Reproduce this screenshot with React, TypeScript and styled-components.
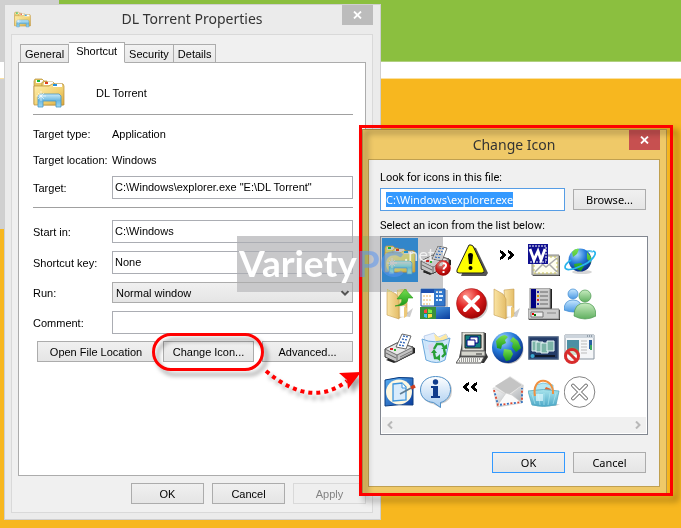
import React, { useEffect, useRef } from "react";
import styled, { createGlobalStyle, css } from "styled-components";

const GlobalStyle = createGlobalStyle`
  * { box-sizing: border-box; }
  body { margin: 0; }
  button, input, select { font: inherit; color: inherit; margin: 0; }
`;

const Desktop = styled.main`
  position: relative;
  min-height: 100vh;
  overflow: hidden;
  color: #000;
  font: 11px/14px "Liberation Sans", Arial, sans-serif;
  background:
    linear-gradient(#d0d0d0, #d0d0d0) 0 0 / 59px 62px no-repeat,
    linear-gradient(#d0d0d0, #d0d0d0) 0 79px / 59px 150px no-repeat,
    linear-gradient(#8bbf3f 0 61px, #b0d080 61px 62px, #fff 62px 78px, #fbe0a0 78px 79px, #f7b71f 79px);
`;

const Window = styled.section`
  position: absolute;
  display: flex;
  flex-direction: column;
  border: 1px solid #cfcfcf;
  background: #ebebeb;
`;

const PropertiesWindow = styled(Window)`
  left: 4px;
  top: 4px;
  width: 377px;
  padding: 0 7px 6px 6px;
`;

const IconWindow = styled(Window)`
  left: 362px;
  top: 129px;
  width: 305px;
  padding: 0 6px 6px 5px;
  border-color: #b6974e;
  background: #efc968;
  font-family: "Noto Sans", "Open Sans", sans-serif;
`;

const TitleBar = styled.header`
  display: grid;
  grid-template-columns: 31px 1fr 31px;
  align-items: start;
  height: 29px;
`;

const TitleIcon = styled.span`
  padding: 6px 0 0 3px;
  line-height: 0;
`;

const Title = styled.h1<{ $low?: boolean }>`
  margin: 0;
  padding-top: ${(p) => (p.$low ? 5 : 4)}px;
  text-align: center;
  white-space: nowrap;
  color: #333;
  font: 400 14px/20px "Noto Sans", "Open Sans", sans-serif;
`;

const CloseButton = styled.button<{ $danger?: boolean }>`
  display: grid;
  place-items: center;
  height: 20px;
  padding: 0;
  border: 0;
  background: ${(p) => (p.$danger ? "#c75050" : "#bcbcbc")};
`;

const Client = styled.div<{ $tone: string }>`
  border: 1px solid ${(p) => p.$tone};
  background: #f0f0f0;
`;

const PropertiesClient = styled(Client)`
  padding: 7px 6px 8px;
`;

const IconClient = styled(Client)`
  padding: 10px 13px 13px 11px;
`;

const Tabs = styled.div`
  display: flex;
  align-items: flex-end;
  height: 21px;
  margin-bottom: -1px;
  padding-left: 2px;
`;

const Tab = styled.button<{ $active?: boolean }>`
  height: 19px;
  padding: 0 4px;
  border: 1px solid #acacac;
  border-left-width: 0;
  background: linear-gradient(#f2f2f2, #e8e8e8);
  white-space: nowrap;
  &:first-child { border-left-width: 1px; }
  ${(p) => p.$active && css`
    height: 21px;
    padding: 0 7px 3px;
    border-bottom-color: #fff;
    background: #fff;
  `}
`;

const Panel = styled.div`
  min-height: 414px;
  padding: 15px 12px 0 14px;
  border: 1px solid #acacac;
  background: #fff;
`;

const Identity = styled.div`
  display: flex;
  align-items: center;
  gap: 31px;
  height: 29px;
  margin-bottom: 7px;
`;

const Rule = styled.hr`
  margin: 0;
  border: 0;
  border-top: 1px solid #a0a0a0;
`;

const Fields = styled.div<{ $rows: string; $pad: string }>`
  display: grid;
  grid-template-columns: 79px 1fr;
  grid-template-rows: ${(p) => p.$rows};
  align-items: center;
  row-gap: 8px;
  padding: ${(p) => p.$pad};
`;

const TextBox = styled.input`
  width: 100%;
  min-width: 0;
  height: 23px;
  padding: 0 2px 2px;
  border: 1px solid #abadb3;
  border-radius: 0;
  outline: 0;
  background: #fff;
`;

const FileBox = styled(TextBox)`
  flex: 1;
  padding: 0 5px 1px;
  border-color: #569de5;
  font: 11px/14px "Noto Sans", sans-serif;
  &::selection { background: #3399ff; color: #fff; }
`;

const SelectWrap = styled.div`
  display: grid;
  align-items: center;
  justify-items: end;
  & > * { grid-area: 1 / 1; }
  & > svg { margin-right: 4px; pointer-events: none; }
`;

const Select = styled.select`
  appearance: none;
  width: 100%;
  height: 21px;
  padding: 0 3px;
  border: 1px solid #acacac;
  border-radius: 0;
  background: linear-gradient(#f0f0f0, #e5e5e5);
`;

const PushButton = styled.button<{ $wide?: boolean; $fill?: boolean; $primary?: boolean }>`
  flex: ${(p) => (p.$fill ? "1 1 0" : "none")};
  width: ${(p) => (p.$wide ? 118 : 73)}px;
  height: 21px;
  padding: 0;
  border: 1px solid ${(p) => (p.$primary ? "#3399ff" : "#acacac")};
  background: linear-gradient(#f0f0f0, #e5e5e5);
  white-space: nowrap;
  &:disabled { border-color: #d9d9d9; background: #efefef; color: #838383; }
`;

const ButtonRow = styled.div<{ $pad: string }>`
  display: flex;
  justify-content: flex-end;
  gap: 8px;
  padding: ${(p) => p.$pad};
`;

const Caption = styled.label`
  display: block;
  font: 11px/16px Roboto, "Noto Sans", sans-serif;
`;

const BrowseRow = styled.div`
  display: flex;
  align-items: center;
  gap: 8px;
  margin: 2px 0 7px;
`;

const IconList = styled.div`
  margin-right: -2px;
  margin-top: 2px;
  padding: 1px;
  border: 1px solid #828790;
  background: #fff;
`;

const IconGrid = styled.div`
  display: grid;
  grid-template-columns: repeat(6, 36px);
  grid-auto-rows: 44px;
  padding-bottom: 3px;
`;

const IconCell = styled.button<{ $selected?: boolean }>`
  display: grid;
  place-items: center;
  padding: 0;
  border: 0;
  background: ${(p) => (p.$selected ? "#3286dc" : "transparent")};
`;

const ScrollTrack = styled.div`
  display: flex;
  align-items: center;
  justify-content: space-between;
  height: 16px;
  padding: 0 5px;
  background: #f0f0f0;
`;

const ScrollButton = styled.button`
  display: grid;
  padding: 0;
  border: 0;
  background: none;
`;

const Callout = styled.div`
  position: absolute;
  left: 359px;
  top: 125px;
  width: 314px;
  height: 371px;
  border: 3px solid #f00;
  filter: drop-shadow(5px 5px 3px rgba(0, 0, 0, 0.4));
  pointer-events: none;
`;

const Marks = styled.svg`
  position: absolute;
  left: 145px;
  top: 325px;
  pointer-events: none;
  filter: drop-shadow(4px 5px 2px rgba(0, 0, 0, 0.35));
`;

const WatermarkShade = styled.div`
  position: absolute;
  left: 237px;
  top: 236px;
  width: 206px;
  height: 56px;
  background: #c8c8ca;
  mix-blend-mode: darken;
  pointer-events: none;
`;

const Watermark = styled.div`
  position: absolute;
  left: 239px;
  top: 236px;
  display: flex;
  color: #fff;
  font: 700 37px/54px Lato, sans-serif;
  white-space: nowrap;
  pointer-events: none;
`;

const BlueText = styled.span`
  color: rgba(90, 150, 240, 0.55);
`;

const Suffix = styled.span`
  margin-top: 6px;
  color: rgba(255, 255, 255, 0.75);
  font: 400 18px/24px Lato, sans-serif;
`;

const Cross = () => (
  <svg width="9" height="8" viewBox="0 0 9 8"><path d="M1 .5l7 7M8 .5l-7 7" stroke="#fff" strokeWidth="1.8" /></svg>
);

const Svg = ({ children, size = 32 }: { children: React.ReactNode; size?: number }) => (
  <svg width={size} height={size} viewBox="0 0 32 32" aria-hidden="true">{children}</svg>
);

const HiddenSvg = styled.svg`
  position: absolute;
`;

const Gradients = () => (
  <HiddenSvg width="0" height="0" aria-hidden="true">
    <defs>
      <linearGradient id="folder" x2="1" y2="1"><stop stopColor="#fff0b0" /><stop offset=".6" stopColor="#f0d070" /><stop offset="1" stopColor="#d8a840" /></linearGradient>
      <linearGradient id="stand" x2="0" y2="1"><stop stopColor="#c8eaf8" /><stop offset=".5" stopColor="#6cb8e0" /><stop offset="1" stopColor="#9cd8f4" /></linearGradient>
      <linearGradient id="tan" x2="1"><stop stopColor="#fae4a4" /><stop offset="1" stopColor="#e4bd68" /></linearGradient>
      <radialGradient id="red" cx=".35" cy=".25" r=".8"><stop stopColor="#ff9a90" /><stop offset=".5" stopColor="#e02020" /><stop offset="1" stopColor="#900" /></radialGradient>
      <radialGradient id="sea" cx=".35" cy=".25" r=".8"><stop stopColor="#a8dcff" /><stop offset=".5" stopColor="#2478d8" /><stop offset="1" stopColor="#06287c" /></radialGradient>
      <linearGradient id="blue" x2="1" y2="1"><stop stopColor="#58b0f4" /><stop offset="1" stopColor="#0a3c9c" /></linearGradient>
      <linearGradient id="pale" x2="0" y2="1"><stop stopColor="#fff" /><stop offset="1" stopColor="#a8cdf0" /></linearGradient>
      <linearGradient id="person" x2="0" y2="1"><stop stopColor="#c8e8ff" /><stop offset="1" stopColor="#4a98e4" /></linearGradient>
      <linearGradient id="personGreen" x2="0" y2="1"><stop stopColor="#c8ecc0" /><stop offset="1" stopColor="#60b060" /></linearGradient>
      <linearGradient id="leaf" x2="0" y2="1"><stop stopColor="#78e050" /><stop offset="1" stopColor="#189818" /></linearGradient>
      <linearGradient id="grey" x2="1" y2="1"><stop stopColor="#fff" /><stop offset="1" stopColor="#a0a4a8" /></linearGradient>
      <linearGradient id="basket" x2="0" y2="1"><stop stopColor="#a8e4ec" /><stop offset="1" stopColor="#4ca8c8" /></linearGradient>
    </defs>
  </HiddenSvg>
);

const Explorer = ({ size }: { size?: number }) => (
  <Svg size={size}>
    <path d="M1 27V4l1-2h7l2 2h3v6h9v17z" fill="#e8c868" stroke="#b48c38" strokeWidth=".7" />
    <path d="M3 3h7v3H3z" fill="#fff" /><path d="M4 3h3v2H4z" fill="#18b838" />
    <path d="M9 7V5h11l2 2h8v21H9z" fill="#f2da88" stroke="#b48c38" strokeWidth=".7" />
    <path d="M11 5h9v3h-9z" fill="#fff" /><path d="M12 5h3v2h-3z" fill="#e04020" />
    <path d="M1 9h15l3-2h11l1 2v19H1z" fill="url(#folder)" stroke="#b88e38" strokeWidth=".7" />
    <path d="M20 7h9v3h-9z" fill="#fff" /><path d="M20 7h4v2h-4z" fill="#2090e0" />
    <path d="M5 30V19l2-2h19l2 2v11h-5v-6H10v6z" fill="url(#stand)" stroke="#4898c8" strokeWidth=".8" />
    <path d="M8 14v10M3 19h10M5 16l6 6M11 16l-6 6" stroke="#fff" strokeWidth=".6" />
  </Svg>
);

const PrinterShape = () => (
  <>
    <path d="M2 28l8 3 21-10v-5l-3-1z" fill="#222" />
    <path d="M1 17l12-6 16 4v6L12 30 1 25z" fill="#c4c4c4" stroke="#333" />
    <path d="M1 17l12-6 16 4-16 8z" fill="#e8e8e8" stroke="#555" strokeWidth=".8" />
    <path d="M12 15l6-13 9 2-5 13z" fill="#fff" stroke="#444" strokeWidth=".8" />
    <path d="M19 4l5 1M18 7l5 1M16 10l6 1M15 13l6 1" stroke="#3468b8" strokeWidth="1.3" strokeDasharray="2 1" />
    <path d="M13 23v6M2 21l10 5" stroke="#666" /><path d="M6 17h3" stroke="#e02020" strokeWidth="2" /><path d="M10 18h2" stroke="#30b030" strokeWidth="2" />
    <path d="M16 25l12-6M16 27l12-6" stroke="#777" />
  </>
);

const Continents = () => (
  <>
    <path d="M4 9c3-4 6-6 9-6l3 2-3 3 1 3-4 2-1 4-4-1z" fill="url(#leaf)" />
    <path d="M12 17l7 1 2 4-3 6-4 1-3-6z" fill="url(#leaf)" /><path d="M21 5l5 4 3 7-5 4-4-5 1-4-3-2z" fill="url(#leaf)" />
  </>
);

const Help = () => <Svg><PrinterShape /><circle cx="23" cy="24" r="7.5" fill="url(#red)" stroke="#a00" strokeWidth=".5" /><path d="M20.5 22c0-4 6-3.500 5.500-.5 0 2-2.500 2-2.500 4" fill="none" stroke="#fff" strokeWidth="2" /><path d="M22.500 27h2v2h-2z" fill="#fff" /></Svg>;
const Warning = () => <Svg><path d="M17 3l3 1 12 25-2 3H5z" fill="#555" /><path d="M15 1h-2L1 26q-1 3 2 3h23q3 0 2-3L17 2z" fill="#ff0" stroke="#222" /><path d="M12 11q0-2 2.500-2t2.500 2l-1 9h-3z" /><circle cx="14.500" cy="24" r="2" /></Svg>;
const Chevrons = ({ left }: { left?: boolean }) => <Svg><path d={left ? "M13 7l-5 4 5 4M21 7l-5 4 5 4" : "M8 7l5 4-5 4M16 7l5 4-5 4"} fill="none" stroke="#000" strokeWidth="2.500" shapeRendering="crispEdges" /></Svg>;
const WordMail = () => <Svg><path d="M5 12h27v20H5z" fill="#222" /><path d="M4 11h27v20H4z" fill="#c8c8b8" stroke="#888" /><path d="M6 13h23v16H6z" fill="#fffff0" stroke="#c8c058" strokeDasharray="2 2" /><path d="M7 14l11 9 11-9M7 28l8-8M29 28l-8-8" fill="none" stroke="#aaa" strokeWidth="1.500" /><path d="M0 0h20v20H0z" fill="#101090" /><path d="M1 2h18M2 18h16M18 3v15" stroke="#fff" strokeDasharray="2 1" /><path d="M2 5l4 11 4-9 3 9 4-11" fill="none" stroke="#fff" strokeWidth="2.800" /></Svg>;
const Internet = () => <Svg><ellipse cx="18" cy="28" rx="10" ry="2" fill="#bbb" opacity=".6" /><path d="M6 18C10 10 24 5 29 8" fill="none" stroke="#60c8f0" strokeWidth="2" /><circle cx="16" cy="16" r="11.500" fill="url(#sea)" /><path d="M8 8q3-4 7-3l-2 5-4 3zM10 20l7-1 3 3-3 5-6-3zM23 8l4 5v6l-4-4z" fill="url(#leaf)" /><path d="M29 7c6 1-1 11-12 15C8 26 1 27 1 23c0-3 3-5 6-7" fill="none" stroke="#28b4ec" strokeWidth="1.700" /></Svg>;
const FolderShape = ({ x = 0 }: { x?: number }) => <g transform={`translate(${x})`}><path d="M18 28l10-8-3 9z" fill="#999" opacity=".5" /><path d="M12 2l10-1v25l-8 4z" fill="url(#tan)" stroke="#c49c50" strokeWidth=".6" /><path d="M15 18h5v11h-5z" fill="#fff" stroke="#ccc" strokeWidth=".5" /><path d="M2 1l9 5 3 5v20L2 27z" fill="url(#tan)" stroke="#c49c50" strokeWidth=".6" /><path d="M22 20v8l-3 2V19z" fill="#ecc878" /></g>;
const FolderUp = () => <Svg><FolderShape x={1} /><path d="M11 18q7-1 7-7h-5l8-10 8 9h-5q0 8-13 8z" fill="url(#leaf)" stroke="#2c9c20" strokeWidth=".6" /></Svg>;
const StartMenu = () => <Svg><path d="M2 2h26v20H2z" fill="#999" opacity=".5" /><path d="M1 1h24v4H1z" fill="#1c50b0" /><path d="M1 5h13v13H1z" fill="#fff" /><path d="M14 1h11v17H14z" fill="#3278cc" /><path d="M1 1h24v17H1z" fill="none" stroke="#2458a8" /><path d="M3 8h8M3 12h9M3 16h7" stroke="#f0b860" strokeDasharray="2 1" /><path d="M16 4h6M16 8h7M16 12h6" stroke="#d8ecff" strokeWidth="2" strokeDasharray="2 1 5" /><path d="M0 19h30v12H0z" fill="url(#blue)" /><path d="M0 19h16v12H0z" fill="#38903c" /><path d="M4 22l3-1v4H4z" fill="#f44" /><path d="M8 21l4 1v3H8z" fill="#7e4" /><path d="M4 26h3v4l-3-1z" fill="#4bf" /><path d="M8 26h4v3l-4 1z" fill="#fd4" /></Svg>;
const ErrorIcon = () => <Svg><circle cx="17" cy="17" r="15" fill="#999" opacity=".5" /><circle cx="15.500" cy="15.500" r="15" fill="url(#red)" stroke="#911" strokeWidth=".5" /><path d="M9 9l13 13M22 9L9 22" stroke="#fff" strokeWidth="4" strokeLinecap="round" /></Svg>;
const Programs = () => <Svg><path d="M3 1h21v21h8v10H1V21h2z" fill="#222" /><path d="M2 0h20v20H2z" fill="#ccc" stroke="#888" /><path d="M3 1h5v19H3z" fill="#000080" /><path d="M12 4h8M12 8h8M12 12h8M12 16h8" stroke="#666" /><path d="M9 3h2v2H9zM9 15h2v2H9z" fill="#22a" /><path d="M9 7h2v2H9z" fill="#c90" /><path d="M9 11h2v2H9z" fill="#d22" /><path d="M0 21h31v10H0z" fill="#ccc" stroke="#888" /><path d="M3 24h12v5H3z" fill="#eee" stroke="#777" /><path d="M4 25h2v2H4z" fill="#d00" /><path d="M6 26h2v2H6z" fill="#070" /><path d="M19 25h9" stroke="#888" /></Svg>;
const Users = () => <Svg><circle cx="9" cy="6" r="5" fill="url(#person)" stroke="#3b88d0" strokeWidth=".7" /><path d="M0 22q0-10 9-10t9 10q-8 4-18 0z" fill="url(#person)" stroke="#3b88d0" strokeWidth=".7" /><circle cx="21" cy="8" r="6" fill="url(#personGreen)" stroke="#4a9850" strokeWidth=".7" /><path d="M10 28q0-13 11-13t11 13q-11 6-22 0z" fill="url(#personGreen)" stroke="#4a9850" strokeWidth=".7" /></Svg>;
const Printer = () => <Svg><PrinterShape /></Svg>;
const Recycle = () => <Svg><path d="M4 4l10-3 4 4 8-3 3 5-3 10H6z" fill="#e4eefc" stroke="#9cb8e0" strokeWidth=".6" /><path d="M14 2l6 4 6-4 2 6-12 3z" fill="#fce8a0" /><path d="M2 7q13 6 28-1l-5 22q-8 5-19 0z" fill="#c8e4fa" fillOpacity=".8" stroke="#6ca8dc" /><path d="M8 13l5-2 3 14-6-2z" fill="#ddd5ef" /><path d="M14 17l3-5h5l2 3M24 17l1 5-3 3M20 26h-5l-1-5" fill="none" stroke="#28a038" strokeWidth="2.400" /><path d="M21 17h6v-5zM20 22v7l-4-3zM11 21h6l-3-4z" fill="#28a038" /></Svg>;
const Computer = () => <Svg><path d="M8 1h22v20l2 4-4 6H2z" fill="#333" /><path d="M6 0h22v19H6z" fill="#deded4" stroke="#666" /><path d="M9 3h16v13H9z" fill="#108080" stroke="#222" /><path d="M14 5h8v6h-8z" fill="#fff" stroke="#000080" /><path d="M11 8h8v6h-8z" fill="#fff" stroke="#000080" /><path d="M5 19h24v5H5z" fill="#d4d4cc" stroke="#666" /><path d="M20 22h6" stroke="#333" /><path d="M4 25h24l-3 6H0z" fill="#f4f4f0" stroke="#555" /><path d="M5 27h20M3 29h20" stroke="#444" strokeDasharray="1 1" /></Svg>;
const Globe = () => <Svg><circle cx="16.500" cy="17" r="15" fill="#777" opacity=".5" /><circle cx="15.500" cy="15.500" r="15.500" fill="url(#sea)" /><Continents /></Svg>;
const Switcher = () => <Svg><path d="M0 4h31v24H0z" fill="#909cac" /><path d="M1 5h29v22H1z" fill="#243c68" stroke="#4c6488" /><path d="M4 9h6v10H4z" fill="#7cb4a8" stroke="#e8f4f8" /><path d="M8 10h7v10H8z" fill="#7cb4a8" stroke="#e8f4f8" /><path d="M13 11h7v10h-7z" fill="#7cb4a8" stroke="#e8f4f8" /><path d="M19 9h7v10h-7z" fill="#7cb4a8" stroke="#e8f4f8" /><path d="M7 23h20v2H7z" fill="#101828" /><circle cx="4.500" cy="24" r="2" fill="#38a8d0" /></Svg>;
const Blocked = () => <Svg><path d="M1 3h29v24H1z" fill="#f4f6f8" stroke="#8894a0" /><path d="M1 3h29v3H1z" fill="#ccd4dc" /><path d="M23 4h6" stroke="#567" strokeDasharray="1 1" /><path d="M3 8h12v15H3z" fill="#4c90a4" /><path d="M3 18q4-6 12 0v5H3z" fill="#60a870" /><path d="M17 9h6M17 12h6M17 15h6M17 18h6M17 21h6" stroke="#bbb" /><path d="M25 8h3v9h-3z" fill="#2860a0" /><path d="M26 13h2v5h-2z" fill="#38a860" /><circle cx="8" cy="24" r="6.500" fill="#fff" fillOpacity=".7" stroke="#d82c2c" strokeWidth="3" /><path d="M4 20l8 8" stroke="#d82c2c" strokeWidth="3" /></Svg>;
const Desk = () => <Svg><path d="M1 4q14-4 28-2v27q-14-1-28 1z" fill="url(#blue)" stroke="#0c3c80" /><ellipse cx="15" cy="16" rx="13" ry="12.500" fill="#fff8e0" /><path d="M9 8l9-1 4 4v13l-13 1z" fill="#d8ecfc" stroke="#3c94dc" strokeWidth="1.300" /><path d="M18 7v5h4" fill="#fff" stroke="#3c94dc" /><path d="M16 18l11-6" stroke="#5c7c94" strokeWidth="1.600" /><path d="M27 12l4-2" stroke="#d04020" strokeWidth="3.500" /></Svg>;
const Info = () => <Svg><path d="M17 1q15 1 15 14 0 10-11 13v4l-8-4Q1 25 1 14z" fill="#aaa" opacity=".6" /><path d="M15.500.5c9 0 15 5 15 13 0 7-5 12-10 13v5l-7-5C6 26 .5 21 .5 14 .5 6 7 .5 15.500.5z" fill="url(#pale)" stroke="#5090c8" /><circle cx="15.500" cy="6" r="2.700" fill="#103c8c" /><path d="M11 10h7v10h2v2h-9v-2h2v-8h-2z" fill="#103c8c" /></Svg>;
const Mail = () => <Svg><path d="M1 12L18 0l14 9-2 18-24 4z" fill="#e8e8e8" /><path d="M3 10L18 1l12 8-14 10z" fill="#c4c4c4" /><path d="M1 12l16 8L31 9l-1 18-25 4z" fill="url(#grey)" stroke="#ccc" strokeWidth=".6" /><path d="M5 30l9-13 6 2 10 8" fill="#fafafa" stroke="#ccc" strokeWidth=".7" /><path d="M2 14l4 15 24-3V12" fill="none" stroke="#e04830" strokeWidth="1.800" strokeDasharray="2 5" /><path d="M2 14l4 15 24-3V12" fill="none" stroke="#3070c0" strokeWidth="1.800" strokeDasharray="2 5" strokeDashoffset="3.500" /></Svg>;
const Basket = () => <Svg><path d="M5 28h27l-4 2H8z" fill="#bbb" opacity=".6" /><path d="M8 9l7-2 10 2v9H7z" fill="#b4e8f4" stroke="#60b8d0" strokeWidth=".7" /><path d="M18 11l5 2-3 5-5-2z" fill="#e06830" /><path d="M0 15q15-3 31 0l-3 14q-13 3-24 0z" fill="url(#basket)" stroke="#58a8c0" strokeWidth=".8" /><path d="M4 18l3 10M10 17l2 12M16 17v12M22 17l-2 12M28 17l-3 11" stroke="#b8ecf4" opacity=".6" /><path d="M7 20c-4-20 19-20 18-2" fill="none" stroke="#f09040" strokeWidth="2" /><path d="M8 18h7v7H8z" fill="#e0faff" opacity=".7" /></Svg>;
const Cancelled = () => <Svg><circle cx="15.500" cy="16" r="15.300" fill="#fff" stroke="#777" strokeWidth=".9" /><path d="M9 9.500L22 22.500M22 9.500L9 22.500" stroke="#666" strokeWidth="3.800" strokeLinecap="round" /><path d="M9 9.500L22 22.500M22 9.500L9 22.500" stroke="#fff" strokeWidth="2" strokeLinecap="round" /></Svg>;

const icons: [string, React.ReactNode][] = [
  ["Explorer", <Explorer />], ["Printer help", <Help />], ["Warning", <Warning />], ["More", <Chevrons />], ["Word mail", <WordMail />], ["Internet", <Internet />],
  ["Folder up", <FolderUp />], ["Start menu", <StartMenu />], ["Error", <ErrorIcon />], ["Folder", <Svg><FolderShape /></Svg>], ["Programs", <Programs />], ["Users", <Users />],
  ["Printer", <Printer />], ["Recycle bin", <Recycle />], ["Computer", <Computer />], ["Globe", <Globe />], ["Window switcher", <Switcher />], ["Blocked window", <Blocked />],
  ["Desktop", <Desk />], ["Information", <Info />], ["Less", <Chevrons left />], ["Mail", <Mail />], ["Basket", <Basket />], ["Cancelled", <Cancelled />],
];

const Arrow = ({ left, color = "#b8b8b8" }: { left?: boolean; color?: string }) => (
  <svg width="6" height="8" viewBox="0 0 6 8"><path d={left ? "M5 .5L1.500 4 5 7.500" : "M1 .5L4.500 4 1 7.500"} fill="none" stroke={color} strokeWidth="2" /></svg>
);

function PropertiesDialog() {
  return (
    <PropertiesWindow aria-labelledby="properties-title">
      <TitleBar>
        <TitleIcon><Explorer size={17} /></TitleIcon>
        <Title id="properties-title">DL Torrent Properties</Title>
        <CloseButton aria-label="Close properties"><Cross /></CloseButton>
      </TitleBar>
      <PropertiesClient $tone="#d9d9d9">
        <Tabs role="tablist">
          <Tab role="tab">General</Tab>
          <Tab role="tab" $active aria-selected="true">Shortcut</Tab>
          <Tab role="tab">Security</Tab>
          <Tab role="tab">Details</Tab>
        </Tabs>
        <Panel role="tabpanel">
          <Identity><Explorer /><span>DL Torrent</span></Identity>
          <Rule />
          <Fields $rows="20px 16px 23px" $pad="9px 0 8px">
            <span>Target type:</span><span>Application</span>
            <span>Target location:</span><span>Windows</span>
            <label htmlFor="target">Target:</label>
            <TextBox id="target" defaultValue={'C:\\Windows\\explorer.exe "E:\\DL Torrent"'} />
          </Fields>
          <Rule />
          <Fields $rows="23px 23px 21px 23px" $pad="12px 0 7px">
            <label htmlFor="start">Start in:</label>
            <TextBox id="start" defaultValue={"C:\\Windows"} />
            <label htmlFor="key">Shortcut key:</label>
            <TextBox id="key" defaultValue="None" />
            <label htmlFor="run">Run:</label>
            <SelectWrap>
              <Select id="run"><option>Normal window</option></Select>
              <svg width="8" height="6" viewBox="0 0 8 6"><path d="M.5 1L4 4.500 7.500 1" fill="none" stroke="#555" strokeWidth="2" /></svg>
            </SelectWrap>
            <label htmlFor="comment">Comment:</label>
            <TextBox id="comment" />
          </Fields>
          <ButtonRow $pad="0 0 0 4px">
            <PushButton $wide>Open File Location</PushButton>
            <PushButton $fill>Change Icon...</PushButton>
            <PushButton $fill>Advanced...</PushButton>
          </ButtonRow>
        </Panel>
        <ButtonRow $pad="7px 0 0">
          <PushButton>OK</PushButton>
          <PushButton>Cancel</PushButton>
          <PushButton disabled>Apply</PushButton>
        </ButtonRow>
      </PropertiesClient>
    </PropertiesWindow>
  );
}

function ChangeIconDialog() {
  const file = useRef<HTMLInputElement>(null);
  useEffect(() => {
    file.current?.focus();
    file.current?.select();
  }, []);
  return (
    <IconWindow aria-labelledby="icon-title">
      <TitleBar>
        <span />
        <Title id="icon-title" $low>Change Icon</Title>
        <CloseButton $danger aria-label="Close change icon"><Cross /></CloseButton>
      </TitleBar>
      <IconClient $tone="#c0a050">
        <Caption htmlFor="file">Look for icons in this file:</Caption>
        <BrowseRow>
          <FileBox id="file" ref={file} defaultValue={"C:\\Windows\\explorer.exe"} />
          <PushButton>Browse...</PushButton>
        </BrowseRow>
        <Caption as="div" id="list-label">Select an icon from the list below:</Caption>
        <IconList role="group" aria-labelledby="list-label">
          <IconGrid>
            {icons.map(([name, drawing], i) => (
              <IconCell key={name} aria-label={name} $selected={i === 0}>{drawing}</IconCell>
            ))}
          </IconGrid>
          <ScrollTrack>
            <ScrollButton aria-label="Scroll left"><Arrow left /></ScrollButton>
            <ScrollButton aria-label="Scroll right"><Arrow /></ScrollButton>
          </ScrollTrack>
        </IconList>
        <ButtonRow $pad="17px 0 0">
          <PushButton $primary>OK</PushButton>
          <PushButton>Cancel</PushButton>
        </ButtonRow>
      </IconClient>
    </IconWindow>
  );
}

export default function App() {
  return (
    <Desktop>
      <GlobalStyle />
      <Gradients />
      <PropertiesDialog />
      <Marks width="220" height="80" viewBox="0 0 220 80" aria-hidden="true">
        <rect x="8.500" y="9.500" width="109" height="35" rx="17.500" fill="none" stroke="#f00" strokeWidth="3" />
        <path d="M121 46Q166 84 202 56" fill="none" stroke="#f00" strokeWidth="4" strokeDasharray="4 4" />
        <path d="M194 48l22-1-13 17-1-9z" fill="#f00" />
      </Marks>
      <ChangeIconDialog />
      <WatermarkShade />
      <Callout />
      <Watermark>Variety<BlueText>PC</BlueText><Suffix>.net</Suffix></Watermark>
    </Desktop>
  );
}
